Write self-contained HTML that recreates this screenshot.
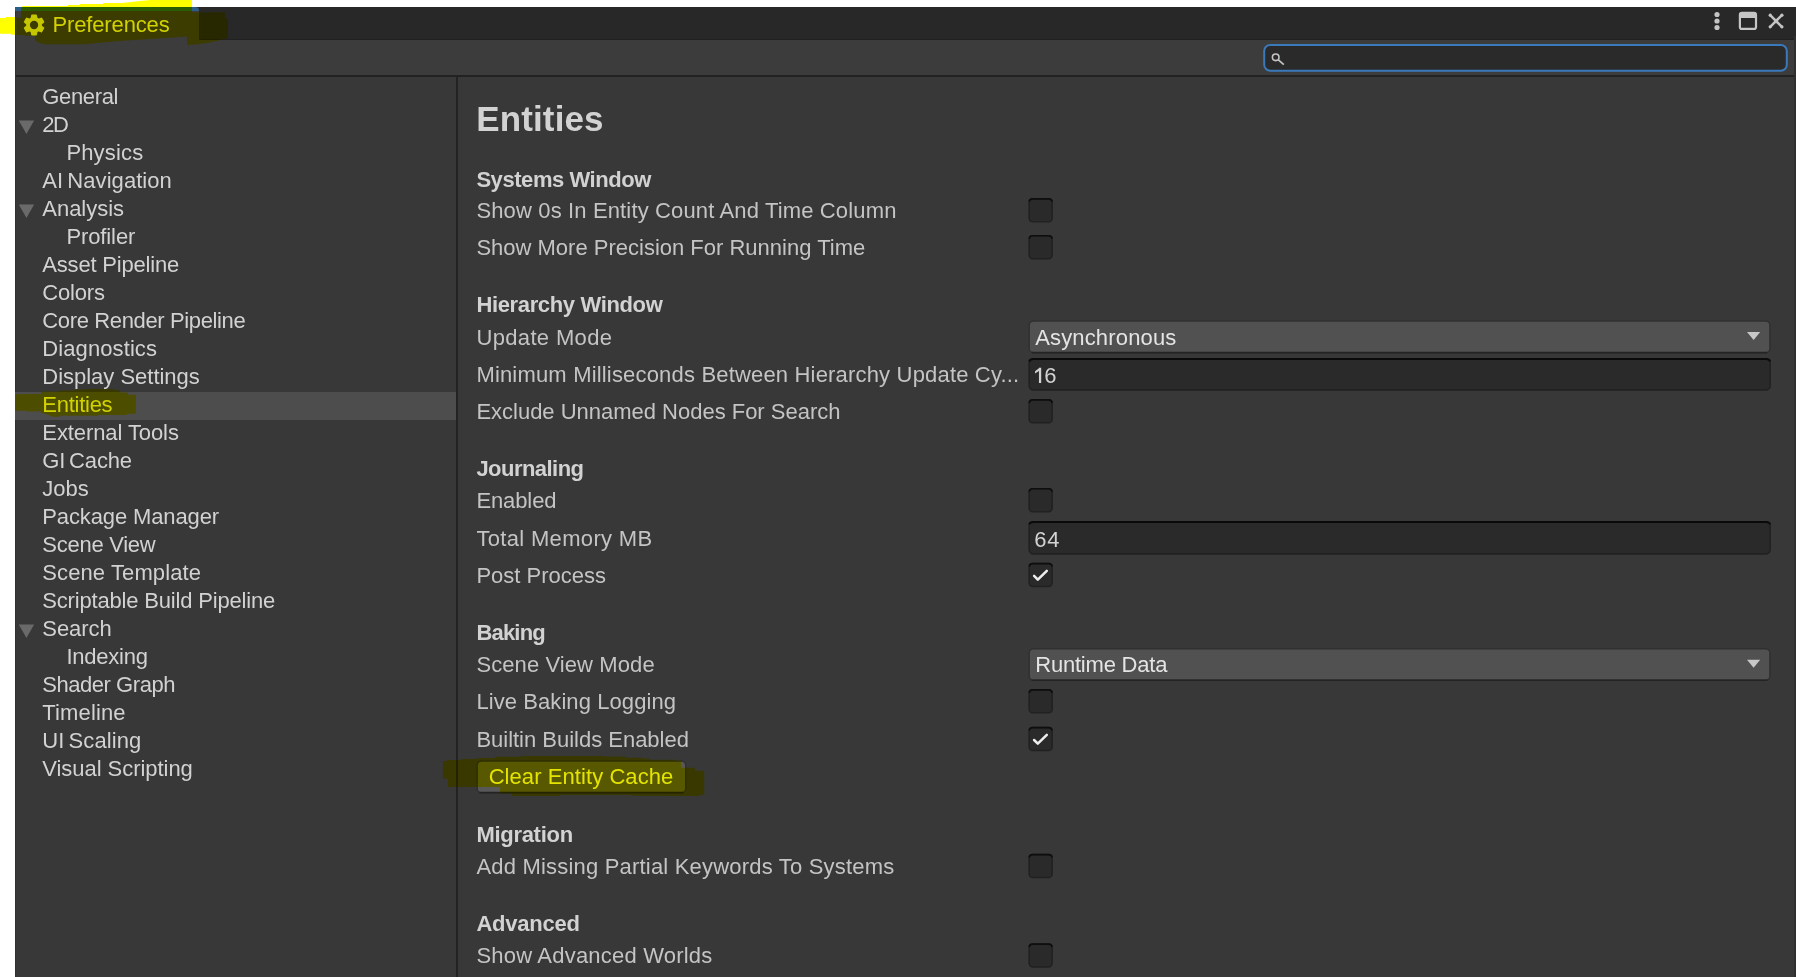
<!DOCTYPE html>
<html><head><meta charset="utf-8"><title>Preferences</title><style>
html,body{margin:0;padding:0}
body{width:1796px;height:977px;overflow:hidden;background:#fff;position:relative;font-family:"Liberation Sans", sans-serif}
.abs,.t,.r{position:absolute}
.t{white-space:nowrap;line-height:normal;font-family:"Liberation Sans", sans-serif}
.r{display:block}
#hl{position:absolute;left:0;top:0;mix-blend-mode:multiply;pointer-events:none}
</style></head>
<body>
<div class="r" style="left:15px;top:7px;width:1781px;height:970px;background:#383838"></div>
<div class="r" style="left:15px;top:7px;width:1781px;height:33px;background:#282828"></div>
<div class="r" style="left:15px;top:40px;width:1781px;height:35px;background:#3c3c3c"></div>
<div class="r" style="left:15px;top:39px;width:1781px;height:1px;background:#212121"></div>
<div class="r" style="left:15px;top:75px;width:1781px;height:2px;background:#222"></div>
<div class="r" style="left:15px;top:7px;width:184.3px;height:34px;background:#3c3c3c;border-top-right-radius:4px"></div>
<div class="r" style="left:15px;top:7px;width:184.3px;height:4px;background:#2c5d87;border-top-right-radius:4px"></div>
<div class="r" style="left:456px;top:77px;width:2px;height:900px;background:#232323"></div>
<div class="r" style="left:15px;top:11px;width:1px;height:966px;background:#303030"></div>
<div class="r" style="left:1794px;top:36px;width:2px;height:941px;background:#2f2f2f"></div>
<div class="r" style="left:15px;top:392px;width:441px;height:28px;background:#4d4d4d"></div>
<svg class="abs" style="left:0;top:0" width="1796" height="977" viewBox="0 0 1796 977"><circle cx="34.05" cy="25.0" r="7.9" fill="#c6c6c6"/><path d="M30.599999999999998 18.5 L31.099999999999994 15.4 Q31.199999999999996 14.5 32.099999999999994 14.5 L36.0 14.5 Q36.9 14.5 37.0 15.4 L37.5 18.5 Z" fill="#c6c6c6" transform="rotate(0 34.05 25.0)"/><path d="M30.599999999999998 18.5 L31.099999999999994 15.4 Q31.199999999999996 14.5 32.099999999999994 14.5 L36.0 14.5 Q36.9 14.5 37.0 15.4 L37.5 18.5 Z" fill="#c6c6c6" transform="rotate(60 34.05 25.0)"/><path d="M30.599999999999998 18.5 L31.099999999999994 15.4 Q31.199999999999996 14.5 32.099999999999994 14.5 L36.0 14.5 Q36.9 14.5 37.0 15.4 L37.5 18.5 Z" fill="#c6c6c6" transform="rotate(120 34.05 25.0)"/><path d="M30.599999999999998 18.5 L31.099999999999994 15.4 Q31.199999999999996 14.5 32.099999999999994 14.5 L36.0 14.5 Q36.9 14.5 37.0 15.4 L37.5 18.5 Z" fill="#c6c6c6" transform="rotate(180 34.05 25.0)"/><path d="M30.599999999999998 18.5 L31.099999999999994 15.4 Q31.199999999999996 14.5 32.099999999999994 14.5 L36.0 14.5 Q36.9 14.5 37.0 15.4 L37.5 18.5 Z" fill="#c6c6c6" transform="rotate(240 34.05 25.0)"/><path d="M30.599999999999998 18.5 L31.099999999999994 15.4 Q31.199999999999996 14.5 32.099999999999994 14.5 L36.0 14.5 Q36.9 14.5 37.0 15.4 L37.5 18.5 Z" fill="#c6c6c6" transform="rotate(300 34.05 25.0)"/><circle cx="34.05" cy="25.0" r="4.15" fill="#3c3c3c"/>
<g fill="#c4c4c4"><circle cx="1717" cy="14.5" r="2.6"/><circle cx="1717" cy="21" r="2.6"/><circle cx="1717" cy="27.5" r="2.6"/></g>
<rect x="1739.9" y="12.9" width="16.1" height="16.0" rx="2" fill="none" stroke="#c6c6c6" stroke-width="2.2"/>
<path d="M1739.9 12.9 h16.1 v5.1 h-16.1 z" fill="#c6c6c6"/>
<path d="M1770.2 15.2 L1781.9 26.8 M1781.9 15.2 L1770.2 26.8" stroke="#c4c4c4" stroke-width="2.5" stroke-linecap="round"/>
<g fill="#c4c4c4"><circle cx="1770.2" cy="15.2" r="1.6"/><circle cx="1781.9" cy="15.2" r="1.6"/><circle cx="1770.2" cy="26.8" r="1.6"/><circle cx="1781.9" cy="26.8" r="1.6"/><circle cx="1776.05" cy="21" r="2.2"/></g>
<rect x="1264.2" y="45" width="522.6" height="25.8" rx="6" fill="#2a2a2a" stroke="#3a79bb" stroke-width="2"/>
<circle cx="1275.7" cy="57.3" r="3.3" fill="none" stroke="#c4c4c4" stroke-width="1.6"/>
<path d="M1278.1 59.6 L1283.8 64.6" stroke="#c4c4c4" stroke-width="1.7"/>
<path d="M18.8 120.4 h15.3 l-7.65 13.6 Z" fill="#6a6a6a"/>
<path d="M18.8 204.4 h15.3 l-7.65 13.6 Z" fill="#6a6a6a"/>
<path d="M18.8 624.4 h15.3 l-7.65 13.6 Z" fill="#6a6a6a"/>
<rect x="1029.15" y="198.75" width="23.0" height="23.0" rx="3.6" fill="#2a2a2a" stroke="#212121" stroke-width="1.5"/><path d="M1029.25 201.80 Q1029.25 198.85 1032.60 198.85 H1048.70 Q1052.05 198.85 1052.05 201.80" fill="none" stroke="#0e0e0e" stroke-width="1.7"/>
<rect x="1029.15" y="235.65" width="23.0" height="23.0" rx="3.6" fill="#2a2a2a" stroke="#212121" stroke-width="1.5"/><path d="M1029.25 238.70 Q1029.25 235.75 1032.60 235.75 H1048.70 Q1052.05 235.75 1052.05 238.70" fill="none" stroke="#0e0e0e" stroke-width="1.7"/>
<rect x="1029.15" y="399.85" width="23.0" height="23.0" rx="3.6" fill="#2a2a2a" stroke="#212121" stroke-width="1.5"/><path d="M1029.25 402.90 Q1029.25 399.95 1032.60 399.95 H1048.70 Q1052.05 399.95 1052.05 402.90" fill="none" stroke="#0e0e0e" stroke-width="1.7"/>
<rect x="1029.15" y="488.65" width="23.0" height="23.0" rx="3.6" fill="#2a2a2a" stroke="#212121" stroke-width="1.5"/><path d="M1029.25 491.70 Q1029.25 488.75 1032.60 488.75 H1048.70 Q1052.05 488.75 1052.05 491.70" fill="none" stroke="#0e0e0e" stroke-width="1.7"/>
<rect x="1029.15" y="563.45" width="23.0" height="23.0" rx="3.6" fill="#2a2a2a" stroke="#212121" stroke-width="1.5"/><path d="M1029.25 566.50 Q1029.25 563.55 1032.60 563.55 H1048.70 Q1052.05 563.55 1052.05 566.50" fill="none" stroke="#0e0e0e" stroke-width="1.7"/><path d="M1034.10 575.90 L1037.80 579.60 L1046.80 570.80" fill="none" stroke="#eeeeee" stroke-width="2.5" stroke-linecap="round" stroke-linejoin="round"/>
<rect x="1029.15" y="689.85" width="23.0" height="23.0" rx="3.6" fill="#2a2a2a" stroke="#212121" stroke-width="1.5"/><path d="M1029.25 692.90 Q1029.25 689.95 1032.60 689.95 H1048.70 Q1052.05 689.95 1052.05 692.90" fill="none" stroke="#0e0e0e" stroke-width="1.7"/>
<rect x="1029.15" y="727.55" width="23.0" height="23.0" rx="3.6" fill="#2a2a2a" stroke="#212121" stroke-width="1.5"/><path d="M1029.25 730.60 Q1029.25 727.65 1032.60 727.65 H1048.70 Q1052.05 727.65 1052.05 730.60" fill="none" stroke="#0e0e0e" stroke-width="1.7"/><path d="M1034.10 740.00 L1037.80 743.70 L1046.80 734.90" fill="none" stroke="#eeeeee" stroke-width="2.5" stroke-linecap="round" stroke-linejoin="round"/>
<rect x="1029.15" y="854.55" width="23.0" height="23.0" rx="3.6" fill="#2a2a2a" stroke="#212121" stroke-width="1.5"/><path d="M1029.25 857.60 Q1029.25 854.65 1032.60 854.65 H1048.70 Q1052.05 854.65 1052.05 857.60" fill="none" stroke="#0e0e0e" stroke-width="1.7"/>
<rect x="1029.15" y="943.95" width="23.0" height="23.0" rx="3.6" fill="#2a2a2a" stroke="#212121" stroke-width="1.5"/><path d="M1029.25 947.00 Q1029.25 944.05 1032.60 944.05 H1048.70 Q1052.05 944.05 1052.05 947.00" fill="none" stroke="#0e0e0e" stroke-width="1.7"/>
<rect x="1029.15" y="320.95" width="740.80" height="31.70" rx="4.5" fill="#515151" stroke="#303030" stroke-width="1.5"/><path d="M1032.40 352.55 H1766.70" stroke="#242424" stroke-width="1.7" stroke-linecap="round"/><path d="M1747.00 331.90 h13.2 l-6.6 8 Z" fill="#c8c8c8"/>
<rect x="1029.15" y="648.85" width="740.80" height="31.50" rx="4.5" fill="#515151" stroke="#303030" stroke-width="1.5"/><path d="M1032.40 680.25 H1766.70" stroke="#242424" stroke-width="1.7" stroke-linecap="round"/><path d="M1747.00 659.80 h13.2 l-6.6 8 Z" fill="#c8c8c8"/>
<rect x="1029.15" y="358.85" width="741.00" height="31.20" rx="4.5" fill="#2a2a2a" stroke="#212121" stroke-width="1.5"/><path d="M1029.35 361.70 Q1029.35 359.05 1033.40 359.05 H1765.90 Q1769.95 359.05 1769.95 361.70" fill="none" stroke="#0a0a0a" stroke-width="1.9"/>
<rect x="1029.15" y="521.75" width="741.00" height="32.30" rx="4.5" fill="#2a2a2a" stroke="#212121" stroke-width="1.5"/><path d="M1029.35 524.60 Q1029.35 521.95 1033.40 521.95 H1765.90 Q1769.95 521.95 1769.95 524.60" fill="none" stroke="#0a0a0a" stroke-width="1.9"/>
<rect x="477.15" y="760.95" width="208.60" height="31.80" rx="4.5" fill="#585858" stroke="#303030" stroke-width="1.5"/><path d="M480.40 792.65 H682.50" stroke="#242424" stroke-width="1.7" stroke-linecap="round"/>
<path d="M1038.95 367.8 h2.25 v15.3 h-2.25 v-12.2 l-3.9 2.6 v-2.3 l3.9 -2.9 z" fill="#d2d2d2"/></svg>
<div class="t" style="left:52.48px;top:12.00px;font-size:22px;color:#d2d2d2;letter-spacing:-0.137px">Preferences</div>
<div class="t" style="left:42.30px;top:84.00px;font-size:22px;color:#d2d2d2;letter-spacing:-0.343px">General</div>
<div class="t" style="left:42.30px;top:112.00px;font-size:22px;color:#d2d2d2;letter-spacing:-1.447px">2D</div>
<div class="t" style="left:66.40px;top:140.00px;font-size:22px;color:#d2d2d2;letter-spacing:0.157px">Physics</div>
<div class="t" style="left:42.30px;top:168.00px;font-size:22px;color:#d2d2d2;letter-spacing:0.055px;word-spacing:-2px">AI Navigation</div>
<div class="t" style="left:42.30px;top:196.00px;font-size:22px;color:#d2d2d2;letter-spacing:-0.023px">Analysis</div>
<div class="t" style="left:66.40px;top:224.00px;font-size:22px;color:#d2d2d2;letter-spacing:-0.102px">Profiler</div>
<div class="t" style="left:42.30px;top:252.00px;font-size:22px;color:#d2d2d2;letter-spacing:-0.185px">Asset Pipeline</div>
<div class="t" style="left:42.30px;top:280.00px;font-size:22px;color:#d2d2d2;letter-spacing:-0.178px">Colors</div>
<div class="t" style="left:42.30px;top:308.00px;font-size:22px;color:#d2d2d2;letter-spacing:-0.364px">Core Render Pipeline</div>
<div class="t" style="left:42.30px;top:336.00px;font-size:22px;color:#d2d2d2;letter-spacing:0.094px">Diagnostics</div>
<div class="t" style="left:42.30px;top:364.00px;font-size:22px;color:#d2d2d2;letter-spacing:-0.017px">Display Settings</div>
<div class="t" style="left:42.30px;top:392.00px;font-size:22px;color:#d2d2d2;letter-spacing:-0.262px">Entities</div>
<div class="t" style="left:42.30px;top:420.00px;font-size:22px;color:#d2d2d2;letter-spacing:-0.089px">External Tools</div>
<div class="t" style="left:42.30px;top:448.00px;font-size:22px;color:#d2d2d2;letter-spacing:-0.171px;word-spacing:-2px">GI Cache</div>
<div class="t" style="left:42.30px;top:476.00px;font-size:22px;color:#d2d2d2;letter-spacing:-0.030px">Jobs</div>
<div class="t" style="left:42.30px;top:504.00px;font-size:22px;color:#d2d2d2;letter-spacing:-0.122px">Package Manager</div>
<div class="t" style="left:42.30px;top:532.00px;font-size:22px;color:#d2d2d2;letter-spacing:-0.264px">Scene View</div>
<div class="t" style="left:42.30px;top:560.00px;font-size:22px;color:#d2d2d2;letter-spacing:0.099px">Scene Template</div>
<div class="t" style="left:42.30px;top:588.00px;font-size:22px;color:#d2d2d2;letter-spacing:-0.180px">Scriptable Build Pipeline</div>
<div class="t" style="left:42.30px;top:616.00px;font-size:22px;color:#d2d2d2;letter-spacing:-0.069px">Search</div>
<div class="t" style="left:66.40px;top:644.00px;font-size:22px;color:#d2d2d2;letter-spacing:-0.240px">Indexing</div>
<div class="t" style="left:42.30px;top:672.00px;font-size:22px;color:#d2d2d2;letter-spacing:-0.462px">Shader Graph</div>
<div class="t" style="left:42.30px;top:700.00px;font-size:22px;color:#d2d2d2;letter-spacing:0.141px">Timeline</div>
<div class="t" style="left:42.30px;top:728.00px;font-size:22px;color:#d2d2d2;letter-spacing:0.069px;word-spacing:-2px">UI Scaling</div>
<div class="t" style="left:42.30px;top:756.00px;font-size:22px;color:#d2d2d2;letter-spacing:-0.045px">Visual Scripting</div>
<div class="t" style="left:476.20px;top:99.00px;font-size:35px;font-weight:bold;color:#d2d2d2;letter-spacing:0.141px">Entities</div>
<div class="t" style="left:476.40px;top:167.00px;font-size:22px;font-weight:bold;color:#d2d2d2;letter-spacing:-0.443px">Systems Window</div>
<div class="t" style="left:476.40px;top:198.00px;font-size:22px;color:#c4c4c4;letter-spacing:0.143px">Show 0s In Entity Count And Time Column</div>
<div class="t" style="left:476.40px;top:235.00px;font-size:22px;color:#c4c4c4;letter-spacing:-0.000px">Show More Precision For Running Time</div>
<div class="t" style="left:476.40px;top:292.00px;font-size:22px;font-weight:bold;color:#d2d2d2;letter-spacing:-0.357px">Hierarchy Window</div>
<div class="t" style="left:476.40px;top:325.00px;font-size:22px;color:#c4c4c4;letter-spacing:0.350px">Update Mode</div>
<div class="t" style="left:476.40px;top:362.00px;font-size:22px;color:#c4c4c4;letter-spacing:0.178px">Minimum Milliseconds Between Hierarchy Update Cy...</div>
<div class="t" style="left:476.40px;top:399.00px;font-size:22px;color:#c4c4c4;letter-spacing:-0.012px">Exclude Unnamed Nodes For Search</div>
<div class="t" style="left:476.40px;top:456.00px;font-size:22px;font-weight:bold;color:#d2d2d2;letter-spacing:-0.542px">Journaling</div>
<div class="t" style="left:476.40px;top:488.00px;font-size:22px;color:#c4c4c4;letter-spacing:-0.100px">Enabled</div>
<div class="t" style="left:476.40px;top:526.00px;font-size:22px;color:#c4c4c4;letter-spacing:0.328px">Total Memory MB</div>
<div class="t" style="left:476.40px;top:563.00px;font-size:22px;color:#c4c4c4;letter-spacing:0.001px">Post Process</div>
<div class="t" style="left:476.40px;top:620.00px;font-size:22px;font-weight:bold;color:#d2d2d2;letter-spacing:-0.795px">Baking</div>
<div class="t" style="left:476.40px;top:652.00px;font-size:22px;color:#c4c4c4;letter-spacing:0.093px">Scene View Mode</div>
<div class="t" style="left:476.40px;top:689.00px;font-size:22px;color:#c4c4c4;letter-spacing:0.079px">Live Baking Logging</div>
<div class="t" style="left:476.40px;top:727.00px;font-size:22px;color:#c4c4c4;letter-spacing:-0.014px">Builtin Builds Enabled</div>
<div class="t" style="left:476.40px;top:822.00px;font-size:22px;font-weight:bold;color:#d2d2d2;letter-spacing:-0.288px">Migration</div>
<div class="t" style="left:476.40px;top:854.00px;font-size:22px;color:#c4c4c4;letter-spacing:0.195px">Add Missing Partial Keywords To Systems</div>
<div class="t" style="left:476.40px;top:911.00px;font-size:22px;font-weight:bold;color:#d2d2d2;letter-spacing:-0.244px">Advanced</div>
<div class="t" style="left:476.40px;top:943.00px;font-size:22px;color:#c4c4c4;letter-spacing:0.207px">Show Advanced Worlds</div>
<div class="t" style="left:488.64px;top:764.00px;font-size:22px;color:#e4e4e4;letter-spacing:0.074px">Clear Entity Cache</div>
<div class="t" style="left:1035.16px;top:325.00px;font-size:22px;color:#e4e4e4;letter-spacing:0.159px">Asynchronous</div>
<div class="t" style="left:1044.13px;top:363.00px;font-size:22px;color:#d2d2d2;letter-spacing:0.000px">6</div>
<div class="t" style="left:1034.23px;top:527.00px;font-size:22px;color:#d2d2d2;letter-spacing:0.754px">64</div>
<div class="t" style="left:1035.28px;top:652.00px;font-size:22px;color:#e4e4e4;letter-spacing:-0.218px">Runtime Data</div>
<svg id="hl" width="1796" height="977" viewBox="0 0 1796 977"><g fill="#ffff00"><path d="M0 18 L6 18 L6 17 L15 17 L15 17.8 L21 17.8 L21 7 L23 6 L68 6 L68 5 L80 5 L80 4 L103 4 L103 3 L122 3 L131 2 L140 1 L150 0 L192 0 L192 12.3 L225 12.3 L225 18 L228 19 L228 38 L222 39.6 L215 41.5 L200 44 L187 45 L187 36.5 L150 39 L120 41 L100 42.8 L85 44.3 L45 44.3 L38 42.5 L35 40 L35 36 L25 36 L25 35 L15 35 L15 34.7 L11 34.7 L11 33.7 L0 33.7 Z"/><path d="M15 394.3 L30 393.9 L41 393.9 L41 391.6 L59 391.6 L59 390.5 L75 390.5 L75 389.6 L85 389.6 L85 388.9 L114 388.9 L114 390 L120 390 L120 392.5 L128 392.5 L128 394.7 L135.9 394.7 L135.9 413.7 L127 413.7 L127 414.9 L98 414.9 L98 415.8 L60 415.8 L60 416.7 L53 416.7 L49 415.2 L44 413.5 L41 413.1 L41 411.6 L27 411.6 L27 410.7 L15 410.7 Z"/><path d="M442.9 761.1 L447 761.1 L447 760 L460.9 760 L460.9 759.1 L476.8 759.1 L476.8 758 L494.9 758 L494.9 756.8 L521 756.8 L521 755.9 L603 755.9 L603 756.6 L626 756.6 L626 757.7 L642 757.7 L642 758.5 L650 758.5 L650 759.7 L675 759.7 L675 760.7 L681 760.7 L681 767.8 L695 767.8 L695 770.8 L704.2 770.8 L704.2 794.7 L700 794.7 L700 796 L632 795.8 L632 795.1 L560 795.1 L560 796 L512.1 796 L512.1 793.5 L500 793.5 L500 787 L447.8 787 L447.8 778.8 L442.9 778.8 Z"/></g></svg>
</body></html>
